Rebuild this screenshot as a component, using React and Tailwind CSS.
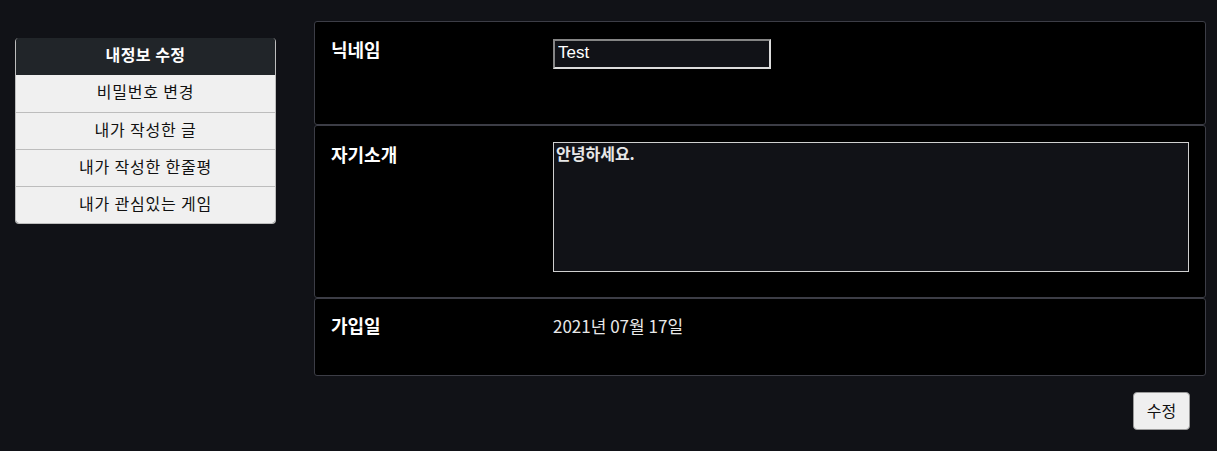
import React, { useState } from 'react';

const menu = ['비밀번호 변경', '내가 작성한 글', '내가 작성한 한줄평', '내가 관심있는 게임'];

export default function App() {
    const [nick, setNick] = useState('Test');
    const [intro, setIntro] = useState('안녕하세요.');

    const font = { fontFamily: '"Noto Sans CJK KR", "Liberation Sans", sans-serif' };
    const card = 'flex border border-[#3c3d46] rounded-[3px] bg-black px-4';
    const label = 'w-[222px] shrink-0 text-[18px] font-bold text-white leading-none';

    return (
        <div className="min-h-[451px] w-full bg-[#111217] flex pl-[15px] pr-[11px] pt-[21px]" style={font}>
            {/* SIDEBAR */}
            <div className="w-[261px] shrink-0 mt-[17px] self-start rounded-[4px] overflow-hidden border border-[#bdbdbd] border-t-0">
                <div className="h-[37px] pb-[5px] bg-[#212529] text-white text-[16px] tracking-[0.03em] font-bold flex items-center justify-center">
                    내정보 수정
                </div>
                {menu.map((m, i) => (
                    <div key={m}
                        className={`h-[37px] pb-[5px] bg-[#f0f0f0] text-[#111] text-[16px] tracking-[0.05em] flex items-center justify-center ${i > 0 ? 'border-t border-[#bdbdbd]' : ''}`}
                    >
                        {m}
                    </div>
                ))}
            </div>

            {/* MAIN */}
            <div className="ml-[38px] flex-1 flex flex-col">
                <div className={`${card} h-[104px] pt-[17px]`}>
                    <div className={`${label} pt-[1px]`}>닉네임</div>
                    <input
                        className="w-[218px] h-[30px] bg-[#111217] text-white text-[17px] px-[3px] pb-[2px] outline-none border-2 border-t-[#858585] border-l-[#858585] border-b-[#dcdcdc] border-r-[#dcdcdc]"
                        style={{ fontFamily: '"Liberation Sans", "Noto Sans CJK KR", sans-serif' }}
                        value={nick}
                        onChange={e => setNick(e.target.value)}
                    />
                </div>
                <div className={`${card} h-[173px] pt-[16px]`}>
                    <div className={`${label} pt-[3px]`}>자기소개</div>
                    <textarea
                        className="flex-1 h-[130px] bg-[#111217] text-[#e8e8e8] text-[16px] font-semibold px-[2px] py-0 outline-none border border-[#d0d0d0] resize-none leading-[20px]"
                        value={intro}
                        onChange={e => setIntro(e.target.value)}
                    />
                </div>
                <div className={`${card} h-[78px] pt-[17px]`}>
                    <div className={label}>가입일</div>
                    <div className="text-[#e8e8e8] text-[17px] leading-none pt-[1px]">2021년 07월 17일</div>
                </div>
                <div className="flex justify-end pr-4 pt-4">
                    <button type="button"
                        className="w-[57px] h-[38px] pb-[3px] bg-[#efefef] border border-[#9a9a9a] rounded-[4px] text-[#111] text-[16px]"
                    >
                        수정
                    </button>
                </div>
            </div>
        </div>
    );
}
